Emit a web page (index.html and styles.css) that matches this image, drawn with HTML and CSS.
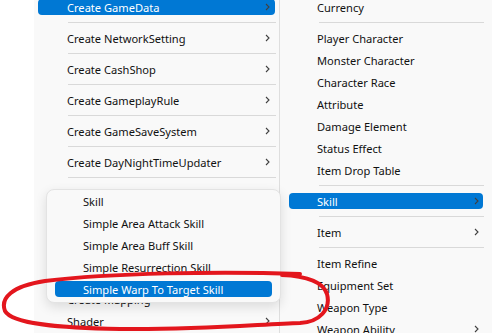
FILE: index.html
```html
<!DOCTYPE html>
<html>

<head>
  <meta charset="UTF-8">
  <title>Create menu</title>
  <link rel="stylesheet" href="styles.css">
</head>

<body>
  <div class="desk">
    <div class="gutter"></div>

    <!-- main create menu -->
    <div class="menu main">
      <div class="item active"><span>Create GameData</span><svg class="chev" viewBox="0 0 5 8"><polyline points="1,1 4,4 1,7" /></svg></div>
      <div class="sep"></div>
      <div class="item"><span>Create NetworkSetting</span><svg class="chev" viewBox="0 0 5 8"><polyline points="1,1 4,4 1,7" /></svg></div>
      <div class="sep"></div>
      <div class="item"><span>Create CashShop</span><svg class="chev" viewBox="0 0 5 8"><polyline points="1,1 4,4 1,7" /></svg></div>
      <div class="sep"></div>
      <div class="item"><span>Create GameplayRule</span><svg class="chev" viewBox="0 0 5 8"><polyline points="1,1 4,4 1,7" /></svg></div>
      <div class="sep"></div>
      <div class="item"><span>Create GameSaveSystem</span><svg class="chev" viewBox="0 0 5 8"><polyline points="1,1 4,4 1,7" /></svg></div>
      <div class="sep"></div>
      <div class="item"><span>Create DayNightTimeUpdater</span><svg class="chev" viewBox="0 0 5 8"><polyline points="1,1 4,4 1,7" /></svg></div>
      <div class="sep"></div>
      <div class="item"><span>Create Character</span><svg class="chev" viewBox="0 0 5 8"><polyline points="1,1 4,4 1,7" /></svg></div>
      <div class="sep"></div>
      <div class="item"><span>Create Item</span><svg class="chev" viewBox="0 0 5 8"><polyline points="1,1 4,4 1,7" /></svg></div>
      <div class="sep"></div>
      <div class="item"><span>Create Skill</span></div>
      <div class="item"><span>Create Map</span></div>
      <div class="item"><span>Create Mapping</span></div>
      <div class="item"><span>Shader</span><svg class="chev" viewBox="0 0 5 8"><polyline points="1,1 4,4 1,7" /></svg></div>
    </div>

    <!-- game data sub menu -->
    <div class="menu sub">
      <div class="item"><span>Currency</span></div>
      <div class="sep"></div>
      <div class="item"><span>Player Character</span></div>
      <div class="item"><span>Monster Character</span></div>
      <div class="item"><span>Character Race</span></div>
      <div class="item"><span>Attribute</span></div>
      <div class="item"><span>Damage Element</span></div>
      <div class="item"><span>Status Effect</span></div>
      <div class="item"><span>Item Drop Table</span></div>
      <div class="sep"></div>
      <div class="item active"><span>Skill</span><svg class="chev" viewBox="0 0 5 8"><polyline points="1,1 4,4 1,7" /></svg></div>
      <div class="sep"></div>
      <div class="item"><span>Item</span><svg class="chev" viewBox="0 0 5 8"><polyline points="1,1 4,4 1,7" /></svg></div>
      <div class="sep"></div>
      <div class="item"><span>Item Refine</span></div>
      <div class="item"><span>Equipment Set</span></div>
      <div class="item"><span>Weapon Type</span></div>
      <div class="item"><span>Weapon Ability</span><svg class="chev" viewBox="0 0 5 8"><polyline points="1,1 4,4 1,7" /></svg></div>
    </div>
  </div>

  <!-- skill popup -->
  <div class="popup">
    <div class="item"><span>Skill</span></div>
    <div class="item"><span>Simple Area Attack Skill</span></div>
    <div class="item"><span>Simple Area Buff Skill</span></div>
    <div class="item"><span>Simple Resurrection Skill</span></div>
    <div class="item active"><span>Simple Warp To Target Skill</span></div>
  </div>

  <!-- red hand drawn circle -->
  <svg class="mark" viewBox="0 0 492 333">
    <path d="M 300 274 C 220 271, 110 273, 45 281 C 12 286, 0 298, 5 311 C 12 324, 60 328, 120 329 C 200 330, 262 324, 300 323 C 320 322, 331 309, 327 294 C 323 282, 306 276, 282 275" />
  </svg>
</body>

</html>
```

FILE: styles.css
```css
/* page */
body {
  margin: 0;
  position: relative;
  width: 492px;
  height: 333px;
  overflow: hidden;
  background-color: #fff;
  font-family: "Noto Sans", "Open Sans", sans-serif;
  font-size: 11.1px;
  color: #111;
}

.desk {
  display: flex;
  align-items: flex-start;
  height: 333px;
}

.gutter {
  width: 34px;
  flex: none;
}

/* menus */
.menu {
  display: flex;
  flex-direction: column;
  background-color: #f9f9f9;
  margin-top: -4px;
  height: 340px;
}

.main {
  width: 245px;
  flex: none;
  border-right: 1px solid #dedede;
}

.sub {
  flex: 1;
  padding: 0 5px 0 5px;
}

.item {
  display: flex;
  align-items: center;
  justify-content: space-between;
  flex: none;
  height: 16px;
  margin: 3px 4px;
  padding: 0 5px 0 29px;
  border-radius: 4px;
  white-space: nowrap;
}

.sub .item {
  padding-left: 28px;
  padding-right: 4px;
}

.item.active {
  background-color: #0078d4;
  color: #fff;
}

.chev {
  width: 5px;
  height: 8px;
}

.chev polyline {
  fill: none;
  stroke: #404040;
  stroke-width: 1.1;
}

.sep {
  flex: none;
  height: 9px;
  margin: 0 3px 0 34px;
  background: linear-gradient(#0000 4px, #d9d9d9 4px, #d9d9d9 5px, #0000 5px);
}

/* skill popup */
.popup {
  position: absolute;
  left: 46px;
  top: 189px;
  width: 217px;
  height: 112px;
  display: flex;
  flex-direction: column;
  padding: 0 8px;
  background-color: #f9f9f9;
  border: 1px solid #e3e3e3;
  border-radius: 8px;
  box-shadow: 0 4px 12px rgba(0, 0, 0, 0.12);
}

.popup .item {
  margin: 3px 0;
  padding-left: 28px;
}

/* annotation */
.mark {
  position: absolute;
  left: 0;
  top: 0;
  width: 492px;
  height: 333px;
  pointer-events: none;
}

.mark path {
  fill: none;
  stroke: #e3161d;
  stroke-width: 4;
  stroke-linecap: round;
}
```
